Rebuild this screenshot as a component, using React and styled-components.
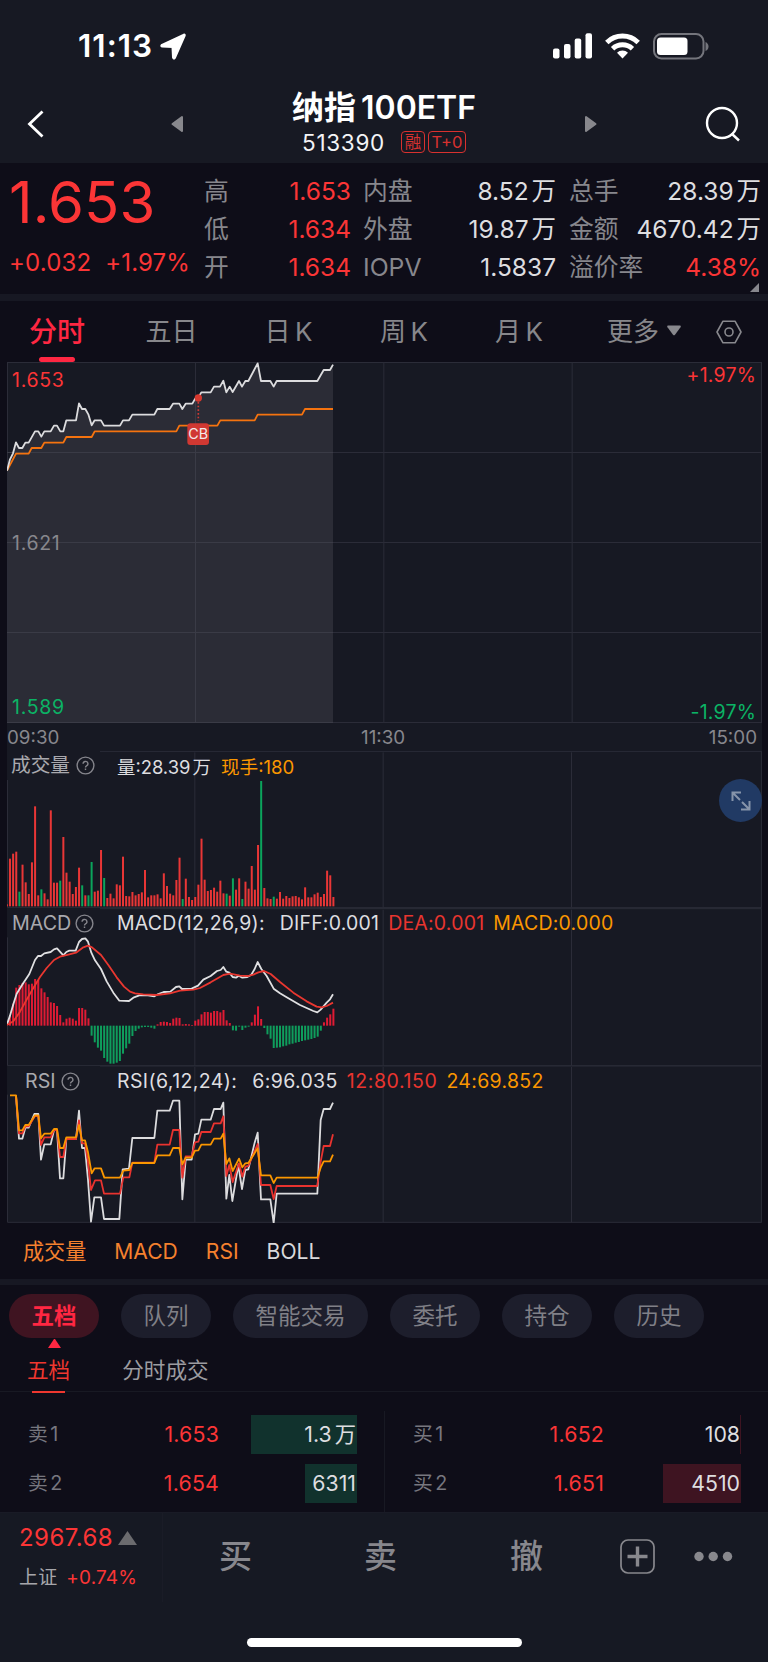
import React from 'react';
import styled, { createGlobalStyle } from 'styled-components';

const GlobalStyle = createGlobalStyle`
  body {
    margin: 0;
    background: #0e0d18;
    font-family: Inter, 'Noto Sans CJK SC', sans-serif;
    line-height: 1.2;
  }

  * {
    box-sizing: border-box;
  }
`;

const RED = '#fb3536';
const GREEN = '#0bb365';
const ORANGE = '#fb9700';
const WHITE = '#dedee0';
const GREY = '#87878d';
const GRID = '#2b2c38';

const Screen = styled.div`
  width: 768px;
  height: 1662px;
  display: flex;
  flex-direction: column;
  overflow: hidden;
  background: #0e0d18;
  color: ${WHITE};
  white-space: nowrap;

  svg {
    display: block;
    flex-shrink: 0;
  }
`;

const StatusBar = styled.div`
  height: 88px;
  flex-shrink: 0;
  display: flex;
  align-items: center;
  padding: 4px 59px 0 78px;
  background: #171923;
  color: #fff;
`;

const Clock = styled.span`
  width: 82px;
  font-size: 31.5px;
  font-weight: 600;
  letter-spacing: 1px;
`;

const StatusIcons = styled.div`
  margin-left: auto;
  display: flex;
  align-items: center;
  gap: 13px;
`;

const Header = styled.div`
  height: 75px;
  flex-shrink: 0;
  display: grid;
  grid-template-columns: 171px 13px 400px 13px 1fr;
  align-items: center;
  padding-bottom: 3px;
  background: #171923;

  svg:first-child {
    margin-left: 27px;
  }

  svg:last-child {
    margin-left: 108px;
  }
`;

const TitleBlock = styled.div`
  display: flex;
  flex-direction: column;
  align-items: center;
`;

const Title = styled.h1`
  margin: 0;
  height: 36px;
  line-height: 36px;
  font-size: 32px;
  font-weight: 600;
  word-spacing: -3px;
  color: #fff;
`;

const CodeLine = styled.div`
  height: 32px;
  display: flex;
  align-items: center;
  font-size: 22.5px;
  letter-spacing: 0.7px;
  color: #f4f4f6;
`;

const Badge = styled.span`
  height: 22px;
  margin-left: ${p => p.$gap}px;
  width: ${p => p.$width}px;
  line-height: 20px;
  text-align: center;
  font-size: 16.5px;
  letter-spacing: 0;
  color: #d8312f;
  border: 1.5px solid #d8312f;
  border-radius: 4px;
`;

const Quote = styled.section`
  height: 131px;
  flex-shrink: 0;
  display: flex;
  padding: 9px 7px 0 9px;
`;

const PriceBlock = styled.div`
  width: 195px;
  color: ${RED};
`;

const Price = styled.div`
  height: 60px;
  line-height: 60px;
  font-size: 58px;
  letter-spacing: 0.1px;
`;

const Changes = styled.div`
  display: flex;
  gap: 14px;
  margin-top: 17px;
  line-height: 28px;
  font-size: 24px;
  letter-spacing: 0.15px;
`;

const Stats = styled.div`
  width: ${p => p.$width}px;
  margin-right: ${p => p.$gap}px;
`;

const Stat = styled.div`
  height: 38px;
  display: flex;
  justify-content: space-between;
  align-items: center;
  padding-top: 2px;
  font-size: 24.5px;
  word-spacing: -4px;
`;

const Label = styled.span`
  font-size: 24.8px;
  color: ${GREY};
`;

const Value = styled.span`
  color: ${p => p.$color || WHITE};
`;

const Corner = styled.div`
  align-self: flex-end;
  margin: 0 2px 2px -11px;
  border-left: 9px solid transparent;
  border-bottom: 9px solid ${GREY};
`;

const Divider = styled.div`
  height: ${p => p.$height}px;
  flex-shrink: 0;
  background: #171823;
`;

const Tabs = styled.nav`
  height: 61px;
  flex-shrink: 0;
  display: grid;
  grid-template-columns: 114px 115px 119px 112px 118px 1fr;
  align-items: stretch;
`;

const Tab = styled.div`
  display: flex;
  flex-direction: column;
  align-items: center;
  padding-top: 14px;
  line-height: 34px;
  font-size: ${p => (p.$active ? 28 : 26)}px;
  font-weight: ${p => (p.$active ? 500 : 400)};
  word-spacing: -3px;
  color: ${p => (p.$active ? '#ff2742' : '#87878b')};

  &::after {
    content: '';
    width: 36px;
    height: 5px;
    margin-top: 8px;
    border-radius: 3px;
    background: ${p => (p.$active ? '#ff2742' : 'transparent')};
  }
`;

const MoreTab = styled.div`
  display: flex;
  align-items: center;
  padding: 0 0 0 29px;
  font-size: 26px;
  color: #87878b;

  svg:first-of-type {
    margin: 0 35px 2px 8px;
  }
`;

const Charts = styled.section`
  width: 755px;
  height: 860px;
  flex-shrink: 0;
  margin-left: 7px;
  background: #171923;
`;

const Panel = styled.div`
  position: relative;
  height: ${p => p.$height}px;
`;

const ScaleText = styled.span`
  position: absolute;
  top: ${p => p.$top}px;
  ${p => (p.$right ? 'right: 6px' : 'left: 5px')};
  line-height: 24px;
  font-size: 19.5px;
  letter-spacing: ${p => (p.$right ? 0.2 : 0.7)}px;
  color: ${p => p.$color};
`;

const TimeAxis = styled.div`
  height: 28px;
  display: flex;
  justify-content: space-between;
  padding: 1px 5px 0 0;
  line-height: 28px;
  font-size: 18.8px;
  color: ${GREY};

  span:nth-child(2) {
    margin-right: 2px;
  }
`;

const PanelHead = styled.div`
  position: absolute;
  top: ${p => p.$top || 1}px;
  left: 0;
  height: 29px;
  display: flex;
  align-items: center;
  font-size: 19.5px;
`;

const PanelName = styled.span`
  width: 110px;
  display: flex;
  align-items: center;
  padding-left: ${p => p.$indent}px;
  padding-bottom: ${p => p.$lift || 0}px;
  gap: ${p => p.$gap}px;
  font-size: 19.7px;
  color: #a9a9ae;
`;

const Reading = styled.span`
  margin-right: ${p => p.$gap}px;
  color: ${p => p.$color || WHITE};
  letter-spacing: ${p => p.$track || 0}px;
  font-size: ${p => p.$size || 19.5}px;
  word-spacing: -3px;
`;

const ExpandButton = styled.div`
  position: absolute;
  top: 28px;
  right: 0;
  width: 43px;
  height: 43px;
  display: flex;
  align-items: center;
  justify-content: center;
  border-radius: 50%;
  background: #213a64;
`;

const IndicatorTabs = styled.div`
  height: 57px;
  flex-shrink: 0;
  display: flex;
  align-items: center;
  gap: 28px;
  padding: 2px 0 0 23px;
  font-size: 21.1px;
`;

const Indicator = styled.span`
  color: ${p => (p.$on ? '#f5812e' : '#d9d9dc')};
`;

const Pills = styled.div`
  height: 53px;
  flex-shrink: 0;
  display: flex;
  gap: 22px;
  padding: 9px 0 0 9px;
`;

const Pill = styled.div`
  height: 44px;
  padding: 0 22.5px;
  line-height: 44px;
  border-radius: 22px;
  font-size: 22.5px;
  font-weight: ${p => (p.$active ? 700 : 400)};
  color: ${p => (p.$active ? '#ff2742' : '#808087')};
  background: ${p => (p.$active ? '#3f1421' : '#1d1e2c')};
`;

const Pointer = styled.div`
  width: 13px;
  margin: 1px 0 0 48px;
  border: 6.5px solid transparent;
  border-top: 0;
  border-bottom: 9px solid #ff2742;
`;

const BookTabs = styled.div`
  height: 44px;
  flex-shrink: 0;
  display: flex;
  gap: 53px;
  padding-left: 27px;
  border-bottom: 1px solid #181923;
`;

const BookTab = styled.div`
  display: flex;
  flex-direction: column;
  align-items: center;
  height: 45px;
  padding-top: 2px;
  line-height: 41px;
  font-size: 21.6px;
  color: ${p => (p.$active ? '#ef372f' : '#9c9ca0')};
  margin-right: ${p => (p.$active ? -1 : 0)}px;

  &::after {
    content: '';
    width: 33px;
    height: 2px;
    background: ${p => (p.$active ? '#ef372f' : 'transparent')};
  }
`;

const Book = styled.div`
  height: 120px;
  flex-shrink: 0;
  display: flex;
  padding-top: 19px;
  overflow: hidden;
`;

const BookSide = styled.div`
  width: 384px;
  padding: 4px 27px 0 28px;
  border-left: ${p => (p.$divided ? 1 : 0)}px solid #181923;
`;

const BookRow = styled.div`
  height: 39px;
  margin-bottom: 9.5px;
  display: grid;
  grid-template-columns: 100px 91px 1fr;
  align-items: center;
  font-size: 21.3px;
  word-spacing: -3px;
`;

const BookLabel = styled.span`
  padding-top: 1px;
  font-size: 19.8px;
  color: #77777f;
`;

const BookPrice = styled.span`
  padding-top: 1px;
  text-align: right;
  letter-spacing: 0.2px;
  color: ${RED};
`;

const Depth = styled.div`
  height: 39px;
  display: flex;
  justify-content: flex-end;
  align-items: center;
  padding: 1px 1px 0 0;
  background: linear-gradient(${p => p.$color}, ${p => p.$color}) right / ${p => p.$size}px 100% no-repeat;
`;

const BottomBar = styled.footer`
  height: 150px;
  flex-shrink: 0;
  display: flex;
  flex-direction: column;
  justify-content: space-between;
  background: #161923;
  border-top: 1px solid #191b26;
`;

const Actions = styled.div`
  height: 88px;
  display: grid;
  grid-template-columns: 163px 145px 146px 146px 1fr;
`;

const IndexBlock = styled.div`
  padding: 9px 0 0 19px;
  border-right: 1px solid #1a1c27;
`;

const IndexPrice = styled.div`
  height: 33px;
  display: flex;
  align-items: center;
  gap: 5px;
  font-size: 24px;
  letter-spacing: 0.45px;
  color: ${RED};

  svg {
    margin-bottom: 2px;
  }
`;

const IndexChange = styled.div`
  display: flex;
  align-items: center;
  gap: 9px;
  height: 47px;
  font-size: 19px;
  letter-spacing: 0.15px;
  color: #a6a6ab;
`;

const Action = styled.div`
  padding-left: ${p => p.$indent}px;
  line-height: 87px;
  font-size: 33px;
  font-weight: 500;
  color: ${GREY};
`;

const Tools = styled.div`
  display: flex;
  align-items: center;
  gap: 38px;
  padding: 0 0 2px 20px;
`;

const HomeIndicator = styled.div`
  align-self: center;
  width: 275px;
  height: 9px;
  margin-bottom: 15px;
  border-radius: 5px;
  background: #fff;
`;

// series are plotted on a grid three times finer than the panel
const STEP = 9.42;

const pricePath =
  '21,542 30,508 39,490 48,457 57,474 67,474 76,458 86,458 105,424 115,424 124,440 133,424 152,424 162,407 171,407 181,424 190,424 199,391 228,391 237,340 246,357 256,357 265,373 275,406 284,391 303,391 312,407 360,407 369,391 387,391 397,374 463,374 472,357 509,357 519,341 538,341 547,357 557,341 577,341 586,325 595,323 604,307 632,307 642,290 660,290 670,272 679,307 689,290 698,306 717,273 726,290 736,273 745,273 773,220 783,273 811,273 821,290 830,273 952,273 971,240 990,240 999,224';
const averagePath =
  '21,542 48,491 86,491 95,474 124,474 133,458 190,458 199,441 275,441 284,424 529,424 538,407 652,407 661,391 764,391 773,374 906,374 915,357 999,357';

const diffPath =
  '21,358 30,332 40,298 50,266 70,234 88,207 105,165 114,153 123,153 133,145 152,141 162,133 171,130 190,151 199,141 208,137 227,137 237,111 246,102 256,100 264,110 274,143 285,166 303,192 320,229 340,263 358,287 387,288 400,278 418,271 444,271 463,274 475,267 491,261 511,260 528,246 538,244 546,252 575,251 594,242 610,224 632,213 651,198 662,195 670,186 679,200 688,203 698,216 708,218 716,212 727,218 742,216 754,209 764,192 773,171 784,192 800,213 821,251 840,265 860,277 900,300 940,318 952,322 962,314 980,293 990,283 999,268';
const deaPath =
  '21,360 40,349 60,320 80,284 100,249 120,216 140,189 162,165 180,155 205,149 228,143 248,128 264,122 276,127 303,150 325,180 350,217 372,245 390,260 405,265 430,268 470,270 510,265 540,257 580,254 600,249 632,232 670,210 690,206 720,212 745,213 760,209 775,202 792,198 812,207 840,231 880,263 920,289 950,305 965,307 980,303 999,293';

const rsi6Path =
  '48,91 57,221 67,221 76,188 86,188 103,147 115,147 123,284 133,238 152,238 162,195 171,195 180,340 190,340 199,222 228,222 237,137 246,249 255,249 264,345 273,470 283,397 303,397 312,462 358,462 368,313 387,311 397,219 463,219 472,137 509,137 519,107 538,107 547,403 557,284 575,284 585,208 595,206 604,164 632,164 642,132 662,132 670,113 679,401 688,330 697,408 715,300 726,372 736,315 745,313 764,233 773,203 783,403 811,403 821,474 830,386 952,386 962,165 971,132 990,132 999,113';
const rsi12Path =
  '48,91 57,205 67,205 76,184 86,184 105,153 115,153 123,240 133,217 152,217 162,195 171,195 180,276 190,276 199,222 228,222 237,166 246,235 255,235 264,290 273,375 285,346 303,346 312,386 360,386 370,337 388,337 397,293 463,293 472,239 509,239 519,195 538,195 547,338 557,274 575,274 585,232 595,230 604,201 632,201 642,175 662,175 670,154 679,333 688,300 698,351 717,295 727,335 736,305 745,303 773,237 783,360 811,360 821,402 830,363 952,363 962,290 971,243 990,243 999,208';
const rsi24Path =
  '30,91 48,91 57,196 67,196 76,180 86,180 105,151 115,151 123,220 133,206 152,206 162,192 171,192 180,249 190,249 199,217 228,217 237,180 246,226 255,226 264,262 275,325 284,310 303,310 313,338 360,338 370,317 388,315 397,294 463,294 472,271 509,271 519,249 538,249 547,298 557,278 575,278 585,257 595,256 604,239 632,239 642,221 662,221 670,206 679,297 688,280 698,318 717,281 727,307 736,295 745,294 773,250 783,331 811,331 821,354 830,338 952,338 962,308 971,289 990,289 999,269';

const volumes = [
  6, 143, 158, 164, -44, 125, 72, 37, 132, 300, 33, -51, 39, 21, 288, 71, 71, -77, 208, 101, 74,
  37, 58, 116, -63, 33, -33, -133, 44, 47, 169, -85, 25, 38, 24, 66, 63, 149, 31, 30, 43, 33,
  37, 42, 109, 27, 33, 33, 36, 24, 99, 61, 38, 33, 79, 146, -22, 83, 28, 19, 28, 65, 203,
  80, 46, 49, 56, 44, 77, 39, -38, 32, -84, 50, 84, -22, 74, 53, 121, 50, 184, -376, 55, 24,
  22, -29, 23, 43, 23, 31, 25, 30, 31, 27, 21, 57, 27, 27, 36, 41, 28, 37, 107, 93, 28
];

const histogram = [
  0, 30, 66, 114, 122, 128, 130, 124, 126, 140, 137, 112, 100, 86, 70, 68, 59, 32, 10, 21, 24,
  21, 15, 53, 53, 48, 22, -30, -50, -66, -75, -97, -108, -114, -114, -111, -106, -84, -68, -54, -31, -16,
  -9, -5, -4, -4, -6, -9, 4, 11, 12, 11, 8, 21, 24, 23, 4, 5, 4, 2, 15, 19, 34,
  41, 41, 39, 44, 44, 40, 47, 16, 8, -14, -15, -3, -13, -6, -3, 10, 33, 58, 20, -7, -26,
  -39, -67, -66, -65, -62, -60, -56, -54, -51, -49, -46, -44, -42, -40, -37, -33, -15, 10, 24, 34, 51
];

const Line = ({ points, color, width = 5.4 }) => (
  <polyline points={points} fill="none" stroke={color} strokeWidth={width} strokeLinejoin="round" />
);

const PriceChart = () => (
  <svg width="755" height="361" viewBox="21 216 2265 1083">
    <polygon points={`${pricePath} 999,1298 21,1298`} fill="#2b2c36" />
    <g stroke={GRID} strokeWidth="3">
      <rect x="22.5" y="217.5" width="2262" height="1080" fill="none" />
      <path d="M21 487.5H2286M21 757.5H2286M21 1027.5H2286M586.5 216V1298M1151.5 216V1298M1716.5 216V1298" />
    </g>
    <path d="M21 487.5H999M21 757.5H999M21 1027.5H999M586.5 330V1298M21 1297.5H999" stroke="#3a3b46" strokeWidth="3" />
    <Line points={averagePath} color="#f5730f" />
    <Line points={pricePath} color="#dcdcde" />
    <path d="M595 336V392" stroke="#cf3833" strokeWidth="5" strokeDasharray="5 6" />
    <circle cx="595" cy="324" r="11" fill="#d8392f" />
    <rect x="562" y="400" width="65" height="65" rx="9" fill="#d03832" />
    <text x="594.5" y="448" fontSize="43" textAnchor="middle" fill="#f3e9ea">CB</text>
  </svg>
);

const SubGrid = ({ bottom }) => (
  <g stroke={GRID} strokeWidth="3" fill="none">
    <path d={`M300 2H2285V${bottom}M22.5 88V${bottom}H2285M584.5 5V${bottom}M1149.5 5V${bottom}M1714.5 5V${bottom}`} />
  </g>
);

const VolumeChart = () => (
  <svg width="755" height="157" viewBox="21 1 2265 471">
    <SubGrid bottom={471} />
    {volumes.map((v, i) => (
      <rect
        key={i}
        x={20.5 + i * STEP - 3}
        y={467 - Math.abs(v)}
        width="6"
        height={Math.abs(v)}
        fill={v < 0 ? '#0ba45c' : '#e93636'}
      />
    ))}
  </svg>
);

const MacdChart = () => (
  <svg width="755" height="158" viewBox="21 9 2265 474">
    <g transform="translate(0 9)">
      <SubGrid bottom={473} />
    </g>
    {histogram.map((v, i) => (
      <rect
        key={i}
        x={20.5 + i * STEP - 3}
        y={v < 0 ? 362 : 362 - v}
        width="6"
        height={Math.abs(v)}
        fill={v < 0 ? '#0f9d5c' : '#df1b34'}
      />
    ))}
    <Line points={diffPath} color="#e0e0e2" />
    <Line points={deaPath} color="#e93730" />
  </svg>
);

const RsiChart = () => (
  <svg width="755" height="157" viewBox="21 3 2265 471">
    <g transform="translate(0 1)">
      <SubGrid bottom={471} />
    </g>
    <Line points={rsi6Path} color="#dcdcde" />
    <Line points={rsi12Path} color="#e9332f" />
    <Line points={rsi24Path} color="#fb9700" />
  </svg>
);

const HelpIcon = () => (
  <svg width="19" height="19" viewBox="0 0 19 19">
    <circle cx="9.5" cy="9.5" r="8.4" fill="none" stroke="#85858c" strokeWidth="1.4" />
    <path
      d="M7.1 7.7a2.4 2.3 0 1 1 3.4 2.1q-1 .5-1 1.6M9.5 12.6v1.5"
      fill="none"
      stroke="#85858c"
      strokeWidth="1.4"
    />
  </svg>
);

const LocationIcon = () => (
  <svg width="26" height="27" viewBox="0 0 26 27">
    <path
      d="M24 1.6 2 11.8q-1.500 1.400.2 1.800l10.300.4.5 10.500q.8 2 1.800.5L24.700 2.600q.3-1.200-.7-1z"
      fill="#fff"
      stroke="#fff"
      strokeWidth="2"
      strokeLinejoin="round"
    />
  </svg>
);

const SignalIcon = () => (
  <svg width="39" height="26" viewBox="0 0 39 26" fill="#fff">
    <rect x="0" y="15.5" width="6.5" height="10" rx="2" />
    <rect x="11" y="11" width="6.5" height="14.5" rx="2" />
    <rect x="21.7" y="5.5" width="6.5" height="20" rx="2" />
    <rect x="32.5" y="0.3" width="6.5" height="25.2" rx="2" />
  </svg>
);

const WifiIcon = () => (
  <svg width="35" height="26" viewBox="0 0 35 26">
    <g fill="none" stroke="#fff" strokeWidth="4.9">
      <path d="M1.8 9.4a22.5 22.5 0 0 1 31.4 0" />
      <path d="M7.6 15.8a14.3 14.3 0 0 1 19.8 0" />
    </g>
    <path d="M17.5 25.4 12 19.7a8 8 0 0 1 11 0z" fill="#fff" />
  </svg>
);

const BatteryIcon = () => (
  <svg width="56" height="27" viewBox="0 0 56 27">
    <rect x="1" y="1" width="49.5" height="24.5" rx="7.5" fill="none" stroke="#74757c" strokeWidth="2" />
    <rect x="4" y="4.5" width="30.5" height="17.5" rx="3.5" fill="#fff" />
    <path d="M52.5 9v9q3-1.5 3-4.5t-3-4.5z" fill="#74757c" />
  </svg>
);

const BackIcon = () => (
  <svg width="17" height="28" viewBox="0 0 17 28">
    <path d="M15.5 1.5 2.5 14l13 12.5" fill="none" stroke="#fff" strokeWidth="2.8" />
  </svg>
);

const SearchIcon = () => (
  <svg width="36" height="36" viewBox="0 0 36 36" fill="none" stroke="#fff" strokeWidth="2.4">
    <circle cx="17" cy="17" r="15" />
    <path d="m26.5 27.5 7.5 7" />
  </svg>
);

const Arrow = ({ right }) => (
  <svg width="13" height="18" viewBox="0 0 13 18">
    <path
      d={right ? 'M2 2v14l9.5-7z' : 'M11 2v14L1.5 9z'}
      fill="#88888d"
      stroke="#88888d"
      strokeWidth="2"
      strokeLinejoin="round"
    />
  </svg>
);

const HexIcon = () => (
  <svg width="26" height="24" viewBox="0 0 26 24" fill="none" stroke="#88888d" strokeWidth="1.6">
    <path d="M7 1.2h12L25 12l-6 10.8H7L1 12z" strokeLinejoin="round" />
    <circle cx="13" cy="12" r="4" />
  </svg>
);

const ExpandIcon = () => (
  <svg width="20" height="20" viewBox="0 0 20 20" fill="none" stroke="#8694aa" strokeWidth="2">
    <path d="M1.5 10v-8.5h8.5M1.5 1.5l7.5 7.5M18.5 10v8.5h-8.5M18.5 18.5l-7.5-7.5" />
  </svg>
);

const PlusIcon = () => (
  <svg width="35" height="35" viewBox="0 0 35 35" fill="none" stroke="#88888d">
    <rect x="1" y="1" width="33" height="33" rx="7" strokeWidth="1.7" />
    <path d="M7.5 17.5h20M17.5 7.5v20" strokeWidth="3.4" />
  </svg>
);

const DotsIcon = () => (
  <svg width="40" height="12" viewBox="0 0 40 12" fill="#88888d">
    <circle cx="6" cy="5.5" r="4.7" />
    <circle cx="20.2" cy="5.5" r="4.7" />
    <circle cx="34.5" cy="5.5" r="4.7" />
  </svg>
);

const stats = [
  {
    width: 147,
    gap: 12,
    rows: [['高', '1.653', RED], ['低', '1.634', RED], ['开', '1.634', RED]]
  },
  {
    width: 193,
    gap: 13,
    rows: [['内盘', '8.52 万'], ['外盘', '19.87 万'], ['IOPV', '1.5837']]
  },
  {
    width: 192,
    gap: 0,
    rows: [['总手', '28.39 万'], ['金额', '4670.42 万'], ['溢价率', '4.38%', RED]]
  }
];

const asks = [
  { name: '卖 1', price: '1.653', amount: '1.3 万', size: 106 },
  { name: '卖 2', price: '1.654', amount: '6311', size: 52 },
  { name: '卖 3', size: 28 }
];

const bids = [
  { name: '买 1', price: '1.652', amount: '108', size: 1.5 },
  { name: '买 2', price: '1.651', amount: '4510', size: 78 },
  { name: '买 3', size: 73 }
];

const OrderSide = ({ orders, color, divided }) => (
  <BookSide $divided={divided}>
    {orders.slice(0, 2).map(o => (
      <BookRow key={o.name}>
        <BookLabel>{o.name}</BookLabel>
        <BookPrice>{o.price}</BookPrice>
        <Depth $color={color} $size={o.size}>{o.amount}</Depth>
      </BookRow>
    ))}
    <Depth $color={color} $size={orders[2].size} />
  </BookSide>
);

const App = () => (
  <Screen>
    <GlobalStyle />
    <StatusBar>
      <Clock>11:13</Clock>
      <LocationIcon />
      <StatusIcons>
        <SignalIcon />
        <WifiIcon />
        <BatteryIcon />
      </StatusIcons>
    </StatusBar>

    <Header>
      <BackIcon />
      <Arrow />
      <TitleBlock>
        <Title>纳指 100ETF</Title>
        <CodeLine>
          513390
          <Badge $gap={16} $width={24}>融</Badge>
          <Badge $gap={3} $width={38}>T+0</Badge>
        </CodeLine>
      </TitleBlock>
      <Arrow right />
      <SearchIcon />
    </Header>

    <Quote>
      <PriceBlock>
        <Price>1.653</Price>
        <Changes>
          <span>+0.032</span>
          <span>+1.97%</span>
        </Changes>
      </PriceBlock>
      {stats.map(group => (
        <Stats key={group.width} $width={group.width} $gap={group.gap}>
          {group.rows.map(([label, value, color]) => (
            <Stat key={label}>
              <Label>{label}</Label>
              <Value $color={color}>{value}</Value>
            </Stat>
          ))}
        </Stats>
      ))}
      <Corner />
    </Quote>
    <Divider $height={7} />

    <Tabs>
      <Tab $active>分时</Tab>
      <Tab>五日</Tab>
      <Tab>日 K</Tab>
      <Tab>周 K</Tab>
      <Tab>月 K</Tab>
      <MoreTab>
        更多
        <svg width="14" height="11" viewBox="0 0 14 11">
          <path d="M1 .5h12q1.3.4.5 1.7L8 9.8q-1 1-2 0L.5 2.2Q-.3.9 1 .5z" fill="#88888d" />
        </svg>
        <HexIcon />
      </MoreTab>
    </Tabs>

    <Charts>
      <Panel $height={361}>
        <PriceChart />
        <ScaleText $top={6} $color={RED}>1.653</ScaleText>
        <ScaleText $top={169} $color={GREY}>1.621</ScaleText>
        <ScaleText $top={333} $color={GREEN}>1.589</ScaleText>
        <ScaleText $right $top={1} $color={RED}>+1.97%</ScaleText>
        <ScaleText $right $top={338} $color={GREEN}>-1.97%</ScaleText>
      </Panel>
      <TimeAxis>
        <span>09:30</span>
        <span>11:30</span>
        <span>15:00</span>
      </TimeAxis>
      <Panel $height={157}>
        <VolumeChart />
        <PanelHead $top={2}>
          <PanelName $indent={4} $gap={6} $lift={4}>成交量<HelpIcon /></PanelName>
          <Reading $gap={10} $size={18.4}>量:28.39 万</Reading>
          <Reading $color={ORANGE} $size={18.6}>现手:180</Reading>
        </PanelHead>
        <ExpandButton>
          <ExpandIcon />
        </ExpandButton>
      </Panel>
      <Panel $height={158}>
        <MacdChart />
        <PanelHead>
          <PanelName $indent={5} $gap={4}>MACD<HelpIcon /></PanelName>
          <Reading $gap={15} $track={0.2}>MACD(12,26,9):</Reading>
          <Reading $gap={9} $track={0.2}>DIFF:0.001</Reading>
          <Reading $gap={9} $track={0.2} $color="#e9352f">DEA:0.001</Reading>
          <Reading $color={ORANGE} $track={0.2}>MACD:0.000</Reading>
        </PanelHead>
      </Panel>
      <Panel $height={156}>
        <RsiChart />
        <PanelHead>
          <PanelName $indent={18} $gap={5}>RSI<HelpIcon /></PanelName>
          <Reading $gap={15} $track={0.4}>RSI(6,12,24):</Reading>
          <Reading $gap={9} $track={0.35}>6:96.035</Reading>
          <Reading $gap={9} $track={0.6} $color="#e9352f">12:80.150</Reading>
          <Reading $color={ORANGE} $track={0.3}>24:69.852</Reading>
        </PanelHead>
      </Panel>
    </Charts>

    <IndicatorTabs>
      <Indicator $on>成交量</Indicator>
      <Indicator $on>MACD</Indicator>
      <Indicator $on>RSI</Indicator>
      <Indicator>BOLL</Indicator>
    </IndicatorTabs>
    <Divider $height={6} />

    <Pills>
      <Pill $active>五档</Pill>
      <Pill>队列</Pill>
      <Pill>智能交易</Pill>
      <Pill>委托</Pill>
      <Pill>持仓</Pill>
      <Pill>历史</Pill>
    </Pills>
    <Pointer />
    <BookTabs>
      <BookTab $active>五档</BookTab>
      <BookTab>分时成交</BookTab>
    </BookTabs>

    <Book>
      <OrderSide orders={asks} color="#11322d" />
      <OrderSide orders={bids} color="#3e1421" divided />
    </Book>

    <BottomBar>
      <Actions>
        <IndexBlock>
          <IndexPrice>
            2967.68
            <svg width="19" height="14" viewBox="0 0 19 14">
              <path d="M9.5 0 19 14H0z" fill="#6b6b6e" />
            </svg>
          </IndexPrice>
          <IndexChange>
            上证
            <Value $color={RED}>+0.74%</Value>
          </IndexChange>
        </IndexBlock>
        <Action $indent={56}>买</Action>
        <Action $indent={56}>卖</Action>
        <Action $indent={56}>撤</Action>
        <Tools>
          <PlusIcon />
          <DotsIcon />
        </Tools>
      </Actions>
      <HomeIndicator />
    </BottomBar>
  </Screen>
);

export default App;
